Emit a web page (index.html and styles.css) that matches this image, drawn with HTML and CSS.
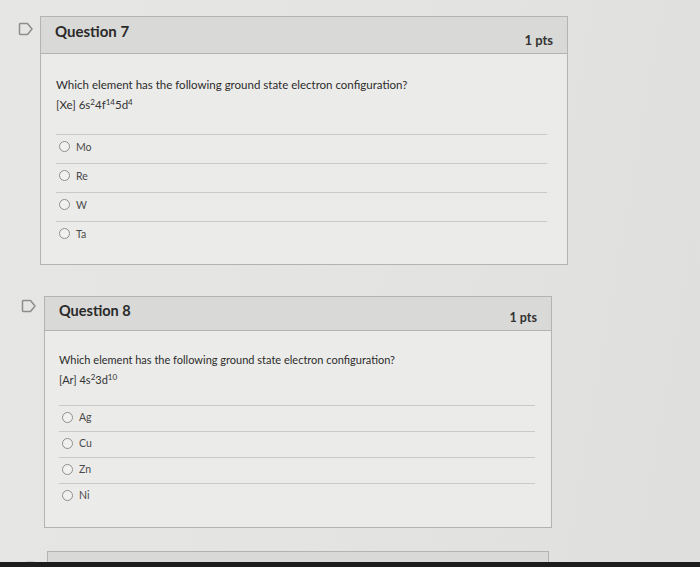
FILE: index.html
```html
<!DOCTYPE html>
<html lang="en">
<head>
<meta charset="utf-8">
<title>Quiz</title>
<link rel="stylesheet" href="styles.css">
</head>
<body>
<main class="page">
  <section class="q q7">
    <div class="flag">
      <svg width="16" height="14" viewBox="0 0 16 14"><path d="M1.5 2.2 Q1.5 1.5 2.2 1.5 H9.5 L14 7 L9.5 12.5 H2.2 Q1.5 12.5 1.5 11.8 Z" fill="none" stroke="#8d8d8b" stroke-width="1.5" stroke-linejoin="round"/></svg>
    </div>
    <div class="card">
      <header class="card-head"><h2>Question 7</h2><span class="pts">1 pts</span></header>
      <div class="card-body">
        <p class="prompt">Which element has the following ground state electron configuration?</p>
        <p class="config">[Xe] 6s<sup>2</sup>4f<sup>14</sup>5d<sup>4</sup></p>
        <ul class="answers">
          <li><span class="radio"></span>Mo</li>
          <li><span class="radio"></span>Re</li>
          <li><span class="radio"></span>W</li>
          <li><span class="radio"></span>Ta</li>
        </ul>
      </div>
    </div>
  </section>

  <section class="q q8">
    <div class="flag">
      <svg width="16" height="14" viewBox="0 0 16 14"><path d="M1.5 2.2 Q1.5 1.5 2.2 1.5 H9.5 L14 7 L9.5 12.5 H2.2 Q1.5 12.5 1.5 11.8 Z" fill="none" stroke="#8d8d8b" stroke-width="1.5" stroke-linejoin="round"/></svg>
    </div>
    <div class="card">
      <header class="card-head"><h2>Question 8</h2><span class="pts">1 pts</span></header>
      <div class="card-body">
        <p class="prompt">Which element has the following ground state electron configuration?</p>
        <p class="config">[Ar] 4s<sup>2</sup>3d<sup>10</sup></p>
        <ul class="answers">
          <li><span class="radio"></span>Ag</li>
          <li><span class="radio"></span>Cu</li>
          <li><span class="radio"></span>Zn</li>
          <li><span class="radio"></span>Ni</li>
        </ul>
      </div>
    </div>
  </section>

  <section class="q q9">
    <div class="flag">
      <svg width="16" height="14" viewBox="0 0 16 14"><path d="M1.5 2.2 Q1.5 1.5 2.2 1.5 H9.5 L14 7 L9.5 12.5 H2.2 Q1.5 12.5 1.5 11.8 Z" fill="none" stroke="#8d8d8b" stroke-width="1.5" stroke-linejoin="round"/></svg>
    </div>
    <div class="card">
      <header class="card-head"><h2>Question 9</h2></header>
    </div>
  </section>
</main>
<div class="bezel"></div>
</body>
</html>
```

FILE: styles.css
```css
html, body {
  margin: 0;
  padding: 0;
  height: 100%;
  overflow: hidden;
}

body {
  background: linear-gradient(100deg, #e6e6e4 0%, #e3e3e1 60%, #dfe0de 100%);
  font-family: Lato, "Open Sans", "Liberation Sans", sans-serif;
  color: #2b2b2b;
}

.page {
  display: flex;
  flex-direction: column;
  padding-top: 16px;
}

.q {
  display: flex;
  align-items: flex-start;
}

.q7 { padding-left: 18px; }
.q8 { padding-left: 21px; margin-top: 31px; }
.q9 { padding-left: 24px; margin-top: 23px; }

.flag {
  display: flex;
}
.q7 .flag { width: 22px; padding-top: 6px; }
.q8 .flag { width: 23px; padding-top: 3px; }
.q9 .flag { width: 23px; padding-top: 10px; }

.card {
  border: 1px solid #b3b3b1;
  background: #ebebe9;
}
.q7 .card { width: 526px; }
.q8 .card { width: 506px; }
.q9 .card { width: 500px; }

.card-head {
  display: flex;
  align-items: center;
  justify-content: space-between;
  background: #d9d9d7;
  border-bottom: 1px solid #b3b3b1;
  padding: 0 14px 0 14px;
}
.q7 .card-head { height: 36px; }
.q8 .card-head { height: 33px; }
.q9 .card-head { height: 30px; align-items: flex-end; }

.card-head h2 {
  margin: 0;
  padding-bottom: 8px;
  font-size: 15px;
  font-weight: 700;
  color: #2a2a2a;
}
.q8 .card-head h2 { font-size: 14.5px; padding-bottom: 6px; }
.q9 .card-head h2 { padding-bottom: 0; line-height: 18px; margin-bottom: -12px; }

.pts {
  font-size: 13px;
  font-weight: 700;
  color: #333;
  padding-top: 10px;
}
.q8 .pts { font-size: 12.5px; padding-top: 8px; }

.card-body {
  padding: 22px 20px 14px 15px;
}
.q8 .card-body { padding: 20px 16px 18px 14px; }

.prompt {
  margin: 0;
  font-size: 11.5px;
  line-height: 18px;
  color: #2c2c2c;
}
.q8 .prompt { font-size: 11px; }

.config {
  margin: 2px 0 0;
  font-size: 11.5px;
  line-height: 18px;
  color: #333;
}
.q8 .config { font-size: 11px; }
.config sup {
  font-size: 8px;
  line-height: 0;
  vertical-align: 4px;
}

.answers {
  list-style: none;
  margin: 20px 0 0;
  padding: 0;
}
.q8 .answers { margin-top: 16px; }

.answers li {
  display: flex;
  align-items: center;
  height: 29px;
  padding: 0 0 5px 3px;
  box-sizing: border-box;
  border-top: 1px solid #c9c9c7;
  font-size: 10.5px;
  color: #4a4a4a;
}
.q8 .answers li { height: 26px; padding-bottom: 3px; }

.radio {
  width: 9px;
  height: 9px;
  border: 1px solid #8f8f8d;
  border-radius: 50%;
  background: #f1f1ef;
  margin-right: 6px;
  flex: none;
}

.bezel {
  position: fixed;
  left: 0;
  right: 0;
  bottom: 0;
  height: 5px;
  background: #1d1d1d;
}
```
